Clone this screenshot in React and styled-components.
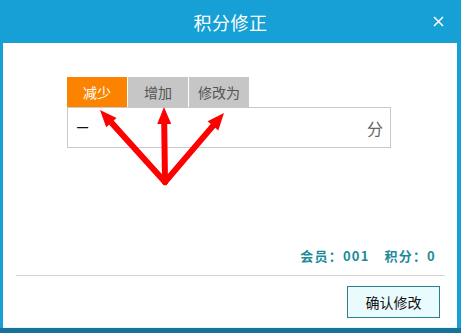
import React from "react";
import styled, { createGlobalStyle } from "styled-components";

const Global = createGlobalStyle`
  html, body { margin: 0; padding: 0; background: #ffffff; }
  * { box-sizing: border-box; }
  body { font-family: "Noto Sans CJK SC", "Noto Sans", sans-serif; }
`;

const Window = styled.div`
  position: relative;
  width: 461px;
  height: 333px;
  background: #17a0d5;
  display: flex;
  flex-direction: column;
  border-bottom: 5px solid #16739b;
`;

const TitleBar = styled.div`
  height: 43px;
  display: grid;
  grid-template-columns: 1fr auto 1fr;
  align-items: center;
  color: #ffffff;
`;

const Title = styled.div`
  grid-column: 2;
  font-size: 18px;
  line-height: 20px;
  letter-spacing: 0.5px;
`;

const Close = styled.div`
  grid-column: 3;
  justify-self: end;
  margin-right: 17px;
  width: 11px;
  height: 11px;
  display: flex;
`;

const Body = styled.div`
  flex: 1;
  margin: 0 4px 0 3px;
  background: #ffffff;
  display: flex;
  flex-direction: column;
  border-bottom: 1px solid #e4f7fb;
`;

const Content = styled.div`
  padding: 34px 0 0 64px;
  display: flex;
  flex-direction: column;
`;

const Tabs = styled.div`
  display: flex;
  gap: 1px;
`;

const Tab = styled.div`
  width: 60px;
  height: 30px;
  display: flex;
  align-items: center;
  justify-content: center;
  font-size: 14px;
  background: ${(p) => (p.$active ? "#fb8300" : "#c6c6c6")};
  color: ${(p) => (p.$active ? "#ffffff" : "#555555")};
`;

const InputBox = styled.div`
  width: 324px;
  height: 41px;
  border: 1px solid #c9c9c9;
  display: flex;
  align-items: center;
  justify-content: space-between;
  padding: 0 7px 0 9px;
`;

const Sign = styled.span`
  font-family: "Liberation Sans", Arial, sans-serif;
  font-size: 20px;
  line-height: 20px;
  color: #111111;
  margin-bottom: 3px;
`;

const Unit = styled.span`
  font-size: 16px;
  color: #666666;
`;

const Spacer = styled.div`
  flex: 1;
`;

const Info = styled.div`
  display: flex;
  justify-content: flex-end;
  gap: 15px;
  padding-right: 21px;
  font-size: 13px;
  font-weight: bold;
  letter-spacing: 1.2px;
  color: #1d8a9a;
  line-height: 16px;
  margin-bottom: 11px;
`;

const Divider = styled.div`
  height: 1px;
  background: #d4d4d4;
  margin: 0 12px 0 13px;
`;

const Footer = styled.div`
  display: flex;
  justify-content: flex-end;
  padding: 10px 17px 9px 0;
`;

const Button = styled.button`
  width: 93px;
  height: 32px;
  border: 1px solid #2c7f8d;
  background: #e9fbfc;
  font-family: inherit;
  font-size: 14px;
  color: #111111;
  padding: 0;
  cursor: pointer;
`;

const Overlay = styled.svg`
  position: absolute;
  left: 0;
  top: 0;
  pointer-events: none;
`;

const origin = [165, 182];
const tips = [
  [100, 110],
  [164, 107],
  [224, 113],
];

function arrow([ox, oy], [tx, ty], headLen = 17, halfW = 7) {
  const dx = tx - ox;
  const dy = ty - oy;
  const len = Math.hypot(dx, dy);
  const ux = dx / len;
  const uy = dy / len;
  const bx = tx - ux * headLen;
  const by = ty - uy * headLen;
  const nx = -uy;
  const ny = ux;
  return {
    line: [ox, oy, bx + ux * 2, by + uy * 2],
    head: `${tx},${ty} ${bx + nx * halfW},${by + ny * halfW} ${bx - nx * halfW},${by - ny * halfW}`,
  };
}

export default function App() {
  return (
    <>
      <Global />
      <Window>
        <TitleBar>
          <Title>积分修正</Title>
          <Close>
            <svg width="11" height="11" viewBox="0 0 11 11">
              <path d="M1 1 L10 10 M10 1 L1 10" stroke="#ffffff" strokeWidth="1.5" fill="none" />
            </svg>
          </Close>
        </TitleBar>
        <Body>
          <Content>
            <Tabs>
              <Tab $active>减少</Tab>
              <Tab>增加</Tab>
              <Tab>修改为</Tab>
            </Tabs>
            <InputBox>
              <Sign>–</Sign>
              <Unit>分</Unit>
            </InputBox>
          </Content>
          <Spacer />
          <Info>
            <span>会员：001</span>
            <span>积分：0</span>
          </Info>
          <Divider />
          <Footer>
            <Button>确认修改</Button>
          </Footer>
        </Body>
        <Overlay width="461" height="333" viewBox="0 0 461 333">
          {tips.map((t, i) => {
            const a = arrow(origin, t);
            return (
              <g key={i}>
                <line
                  x1={a.line[0]}
                  y1={a.line[1]}
                  x2={a.line[2]}
                  y2={a.line[3]}
                  stroke="#ff0000"
                  strokeWidth="6"
                  strokeLinecap="round"
                />
                <polygon points={a.head} fill="#ff0000" />
              </g>
            );
          })}
        </Overlay>
      </Window>
    </>
  );
}
